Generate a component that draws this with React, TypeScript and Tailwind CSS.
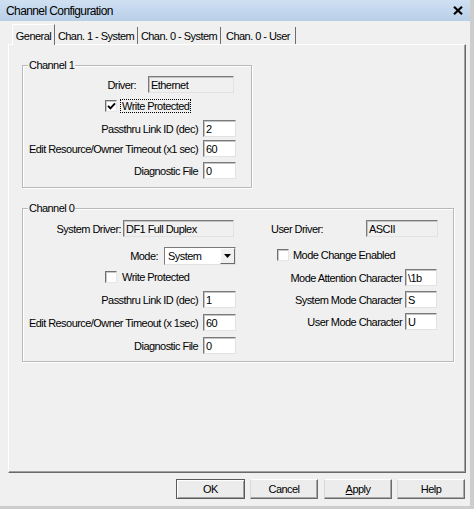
import React from "react";

function Field({ value, w, ro = false, h = 17 }: { value: string; w: number; ro?: boolean; h?: number }) {
  return (
    <div
      className={
        "flex items-center pl-[2px] border border-t-[#7a7a7a] border-l-[#7a7a7a] border-r-[#e2e2e2] border-b-[#e2e2e2] shadow-[inset_1px_1px_0_#c4c4c4] " +
        (ro ? "bg-[#f0f0f0]" : "bg-white")
      }
      style={{ width: w, height: h }}
    >
      <span className="whitespace-nowrap">{value}</span>
    </div>
  );
}

function Check({ checked = false }: { checked?: boolean }) {
  return (
    <span className="w-[12px] h-[12px] flex items-center justify-center bg-white border border-t-[#707070] border-l-[#707070] border-r-[#e6e6e6] border-b-[#e6e6e6] shadow-[inset_1px_1px_0_#c8c8c8]">
      {checked && (
        <svg width="9" height="9" viewBox="0 0 9 9">
          <path d="M1 3.8 L3.4 6.4 L8 1.4" stroke="#000" strokeWidth="1.9" fill="none" />
        </svg>
      )}
    </span>
  );
}

function LabeledInput({ label, value, lw, gap, iw, mt }: { label: string; value: string; lw: number; gap: number; iw: number; mt: number }) {
  return (
    <div className="flex items-center h-[17px]" style={{ marginTop: mt }}>
      <span className="text-right whitespace-nowrap" style={{ width: lw }}>
        {label}
      </span>
      <div style={{ marginLeft: gap }}>
        <Field value={value} w={iw} />
      </div>
    </div>
  );
}

function Group({ title, w, h, mt, children }: { title: string; w: number; h: number; mt: number; children: React.ReactNode }) {
  return (
    <div
      className="relative border border-[#b9b9b9] shadow-[1px_1px_0_#ffffff,inset_1px_1px_0_#ffffff]"
      style={{ width: w, height: h, marginTop: mt }}
    >
      <span className="absolute -top-[8px] left-[5px] px-[1px] bg-[#f0f0f0] whitespace-nowrap">{title}</span>
      {children}
    </div>
  );
}

function Btn({ children, w, ml, def = false }: { children: React.ReactNode; w: number; ml: number; def?: boolean }) {
  return (
    <div
      className={
        "h-[20px] flex items-center justify-center bg-[#ececec] " +
        (def
          ? "border border-[#5a5a5a] shadow-[inset_1px_1px_0_#ffffff,inset_-1px_-1px_0_#a0a0a0]"
          : "border border-t-[#ffffff] border-l-[#d8d8d8] border-r-[#6a6a6a] border-b-[#6a6a6a] shadow-[inset_-1px_-1px_0_#a8a8a8]")
      }
      style={{ width: w, marginLeft: ml }}
    >
      {children}
    </div>
  );
}

export default function App() {
  return (
    <div className="w-[474px] h-[509px] bg-[#f0f0f0] border-r-[4px] border-b-[3px] border-[#cdcdcd] flex flex-col overflow-hidden text-[11px] leading-[14px] tracking-[-0.55px] text-black [font-family:'Liberation_Sans',Arial,sans-serif]">
      {/* Title bar */}
      <div className="h-[21px] shrink-0 flex items-center justify-between pl-[6px] pr-[7px] bg-gradient-to-b from-[#cfe0f2] to-[#b8cfe8] text-[12px] tracking-[-0.6px]">
        <span className="whitespace-nowrap">Channel Configuration</span>
        <svg width="10" height="9" viewBox="0 0 10 9">
          <path d="M1 0.8 L9 8.2 M9 0.8 L1 8.2" stroke="#000" strokeWidth="2.2" />
        </svg>
      </div>

      {/* Tabs */}
      <div className="h-[23px] shrink-0 flex items-end pl-[12px] relative z-10 whitespace-nowrap">
        <div className="h-[21px] -mb-[1px] w-[43px] bg-[#f0f0f0] border-t border-l border-t-white border-l-white border-r border-r-[#6e6e6e] flex justify-center pt-[4px]">
          General
        </div>
        <div className="h-[17px] w-[83px] border-r border-r-[#6e6e6e] flex items-center justify-center">Chan. 1 - System</div>
        <div className="h-[17px] w-[83px] border-r border-r-[#6e6e6e] flex items-center justify-center">Chan. 0 - System</div>
        <div className="h-[17px] w-[75px] border-r border-r-[#6e6e6e] flex items-center justify-center">Chan. 0 - User</div>
      </div>

      {/* Panel */}
      <div className="ml-[8px] w-[458px] h-[429px] shrink-0 border border-t-white border-l-white border-r-[#696969] border-b-[#696969] shadow-[inset_-1px_-1px_0_#a0a0a0] pl-[13px] flex flex-col">
        <Group title="Channel 1" w={230} h={123} mt={20}>
          <div className="flex flex-col">
            <div className="flex items-center h-[17px] mt-[10px]">
              <span className="w-[113px] text-right">Driver:</span>
              <div className="ml-[12px]">
                <Field value="Ethernet" w={86} ro />
              </div>
            </div>
            <div className="flex items-center h-[14px] mt-[6px] ml-[82px]">
              <Check checked />
              <span className="ml-[3px] px-[1px] h-[14px] flex items-center border border-dotted border-black whitespace-nowrap">Write Protected</span>
            </div>
            <LabeledInput label="Passthru Link ID (dec)" value="2" lw={175} gap={5} iw={33} mt={7} />
            <LabeledInput label="Edit Resource/Owner Timeout (x1 sec)" value="60" lw={175} gap={5} iw={33} mt={3} />
            <LabeledInput label="Diagnostic File" value="0" lw={175} gap={5} iw={33} mt={5} />
          </div>
        </Group>

        <Group title="Channel 0" w={432} h={154} mt={20}>
          <div className="flex">
            <div className="w-[217px] flex flex-col">
              <div className="flex items-center h-[17px] mt-[11px]">
                <span className="w-[98px] text-right whitespace-nowrap">System Driver:</span>
                <div className="ml-[2px]">
                  <Field value="DF1 Full Duplex" w={111} ro />
                </div>
              </div>
              <div className="flex items-center h-[18px] mt-[10px]">
                <span className="w-[135px] text-right">Mode:</span>
                <div className="ml-[6px] w-[72px] h-[18px] bg-white border border-t-[#7a7a7a] border-l-[#7a7a7a] border-r-[#e2e2e2] border-b-[#e2e2e2] flex items-center justify-between">
                  <span className="pl-[3px]">System</span>
                  <div className="w-[15px] h-[16px] bg-[#f0f0f0] border border-t-white border-l-white border-r-[#6a6a6a] border-b-[#6a6a6a] flex items-center justify-center">
                    <svg width="7" height="4" viewBox="0 0 7 4">
                      <path d="M0 0 H7 L3.5 4 Z" fill="#000" />
                    </svg>
                  </div>
                </div>
              </div>
              <div className="flex items-center h-[14px] mt-[5px] ml-[82px]">
                <Check />
                <span className="ml-[4px] px-[1px] whitespace-nowrap">Write Protected</span>
              </div>
              <LabeledInput label="Passthru Link ID (dec)" value="1" lw={175} gap={5} iw={33} mt={7} />
              <LabeledInput label="Edit Resource/Owner Timeout (x 1sec)" value="60" lw={175} gap={5} iw={33} mt={6} />
              <LabeledInput label="Diagnostic File" value="0" lw={175} gap={5} iw={33} mt={6} />
            </div>
            <div className="flex flex-col">
              <div className="flex items-center h-[17px] mt-[11px] ml-[31px]">
                <span className="w-[95px] whitespace-nowrap">User Driver:</span>
                <Field value="ASCII" w={72} ro />
              </div>
              <div className="flex items-center h-[14px] mt-[11px] ml-[37px]">
                <Check />
                <span className="ml-[4px] whitespace-nowrap">Mode Change Enabled</span>
              </div>
              <LabeledInput label="Mode Attention Character" value="\1b" lw={162} gap={3} iw={32} mt={7} />
              <LabeledInput label="System Mode Character" value="S" lw={162} gap={3} iw={32} mt={5} />
              <LabeledInput label="User Mode Character" value="U" lw={162} gap={3} iw={32} mt={5} />
            </div>
          </div>
        </Group>
      </div>

      {/* Buttons */}
      <div className="flex mt-[6px] pl-[176px]">
        <Btn w={69} ml={0} def>
          OK
        </Btn>
        <Btn w={68} ml={5}>
          Cancel
        </Btn>
        <Btn w={68} ml={6}>
          <span>
            <span className="underline">A</span>pply
          </span>
        </Btn>
        <Btn w={68} ml={5}>
          Help
        </Btn>
      </div>
    </div>
  );
}
